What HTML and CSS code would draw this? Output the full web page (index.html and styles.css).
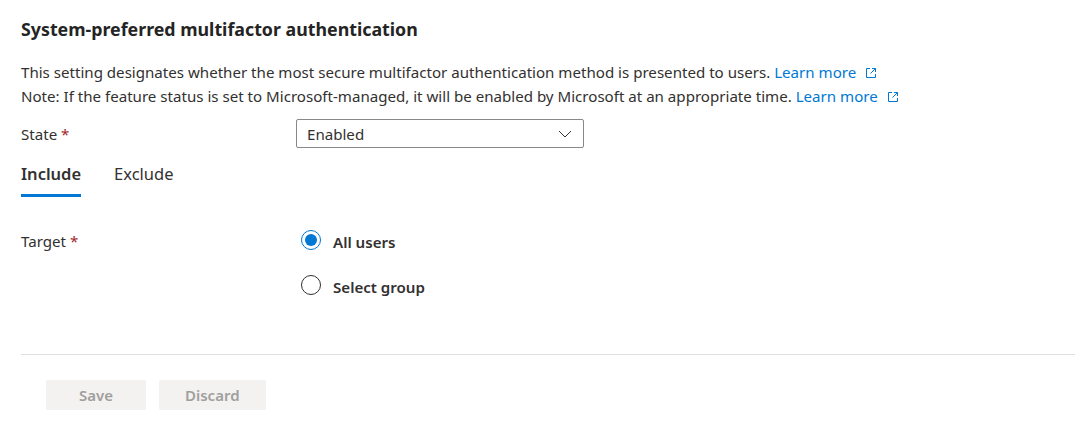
FILE: index.html
```html
<!DOCTYPE html>
<html lang="en">
<head>
  <meta charset="UTF-8" />
  <title>System-preferred multifactor authentication</title>
  <link rel="stylesheet" href="styles.css">
</head>
<body>
  <div class="blade">
    <h2 class="blade-title">System-preferred multifactor authentication</h2>

    <div class="description">
      <p>This setting designates whether the most secure multifactor authentication method is presented to users.
        <a href="#" class="learn-more">Learn more
          <svg class="ext-icon" viewBox="0 0 12 12"><path d="M5 1.5H1.5v9h9V7M7 1.5h3.5V5M10.5 1.5 5.5 6.5" /></svg>
        </a>
      </p>
      <p>Note: If the feature status is set to Microsoft-managed, it will be enabled by Microsoft at an appropriate time.
        <a href="#" class="learn-more">Learn more
          <svg class="ext-icon" viewBox="0 0 12 12"><path d="M5 1.5H1.5v9h9V7M7 1.5h3.5V5M10.5 1.5 5.5 6.5" /></svg>
        </a>
      </p>
    </div>

    <div class="field-row state-row">
      <label class="field-label">State <span class="required">*</span></label>
      <div class="dropdown">
        <span>Enabled</span>
        <svg class="chevron" viewBox="0 0 16 16"><path d="M2 5l6 6 6-6" /></svg>
      </div>
    </div>

    <div class="tabs">
      <div class="tab active">Include</div>
      <div class="tab">Exclude</div>
    </div>

    <div class="field-row target-row">
      <label class="field-label">Target <span class="required">*</span></label>
      <div class="radio-group">
        <div class="radio checked">
          <span class="radio-dot"></span>
          <span class="radio-label">All users</span>
        </div>
        <div class="radio">
          <span class="radio-dot"></span>
          <span class="radio-label">Select group</span>
        </div>
      </div>
    </div>

    <div class="footer">
      <button class="btn" disabled>Save</button>
      <button class="btn" disabled>Discard</button>
    </div>
  </div>
</body>
</html>
```

FILE: styles.css
```css
body {
  margin: 0;
  background: #fff;
  font-family: "Segoe UI", "Noto Sans", sans-serif;
  color: #323130;
  font-size: 15.1px;
}

.blade {
  padding: 16px 0 0 21px;
}

.blade-title {
  margin: 0;
  font-size: 17.8px;
  font-weight: 700;
  line-height: 26px;
  color: #242424;
}

.description {
  margin-top: 18px;
}

.description p {
  margin: 0;
  line-height: 24px;
}

.learn-more {
  color: #0078d4;
  text-decoration: none;
  white-space: nowrap;
}

.ext-icon {
  width: 12px;
  height: 12px;
  margin-left: 5px;
  vertical-align: -1px;
  fill: none;
  stroke: #0078d4;
  stroke-width: 1;
}

.field-row {
  display: grid;
  grid-template-columns: 275px 288px;
}

.field-label {
  line-height: 20px;
}

.required {
  color: #a4262c;
}

.state-row {
  margin-top: 11px;
}

.state-row .field-label {
  padding-top: 5px;
}

.dropdown {
  height: 27px;
  border: 1px solid #8a8886;
  border-radius: 2px;
  display: flex;
  align-items: center;
  justify-content: space-between;
  padding: 0 10px;
}

.chevron {
  width: 16px;
  height: 16px;
  fill: none;
  stroke: #323130;
  stroke-width: 1;
}

.tabs {
  display: flex;
  gap: 33px;
  margin-top: 14px;
}

.tab {
  font-size: 16.5px;
  line-height: 24px;
  padding-bottom: 8px;
  border-bottom: 3px solid transparent;
}

.tab.active {
  font-weight: 600;
  border-bottom-color: #0078d4;
}

.target-row {
  margin-top: 31px;
}

.target-row .field-label {
  padding-top: 3px;
}

.radio-group {
  display: flex;
  flex-direction: column;
  gap: 21px;
  padding-left: 5px;
}

.radio {
  display: flex;
  align-items: center;
  gap: 12px;
}

.radio-dot {
  width: 20px;
  height: 20px;
  box-sizing: border-box;
  border: 1px solid #323130;
  border-radius: 50%;
  display: flex;
  align-items: center;
  justify-content: center;
}

.radio.checked .radio-dot {
  border-color: #0078d4;
}

.radio.checked .radio-dot::after {
  content: "";
  width: 12px;
  height: 12px;
  border-radius: 50%;
  background: #0078d4;
}

.radio-label {
  font-weight: 600;
  line-height: 20px;
  padding-top: 4px;
}

.footer {
  margin-top: 57px;
  border-top: 1px solid #e1dfdd;
  padding: 25px 0 0 25px;
  display: flex;
  gap: 13px;
}

.btn {
  height: 30px;
  border: none;
  border-radius: 2px;
  background: #f3f2f1;
  color: #a19f9d;
  font-family: inherit;
  font-size: 15px;
  font-weight: 600;
  padding: 0 26px;
  min-width: 100px;
}
```
